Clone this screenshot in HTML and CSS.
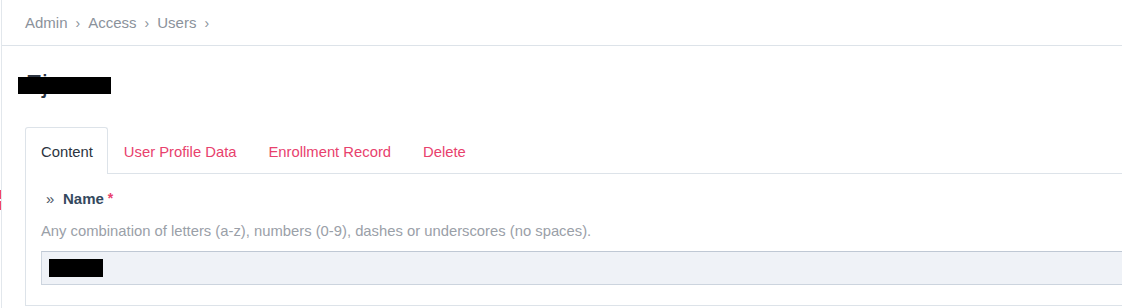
FILE: index.html
```html
<!DOCTYPE html>
<html lang="en">
<head>
<meta charset="utf-8">
<title>Users</title>
<link rel="stylesheet" href="styles.css">
</head>
<body>
<div class="edge-marks"><span class="mark"></span><span class="mark"></span></div>
<div class="app">
  <nav class="breadcrumb">
    <a class="crumb">Admin</a><span class="sep">›</span>
    <a class="crumb">Access</a><span class="sep">›</span>
    <a class="crumb">Users</a><span class="sep">›</span>
  </nav>
  <div class="content">
    <h1 class="title">Zj<span class="redact title-redact"></span></h1>
    <ul class="tabs">
      <li class="tab active">Content</li>
      <li class="tab">User Profile Data</li>
      <li class="tab">Enrollment Record</li>
      <li class="tab">Delete</li>
    </ul>
    <div class="panel">
      <div class="field-label"><span class="chev">»</span><span class="label-text">Name</span><span class="req">*</span></div>
      <div class="help">Any combination of letters (a-z), numbers (0-9), dashes or underscores (no spaces).</div>
      <div class="input"><span class="redact input-redact"></span></div>
    </div>
  </div>
</div>
</body>
</html>
```
FILE: styles.css
```css
html, body {
  margin: 0;
  padding: 0;
  overflow: hidden;
  background: #ffffff;
}
body {
  font-family: "Liberation Sans", Arial, sans-serif;
  font-size: 14.8px;
  color: #2c3440;
}
.edge-marks {
  position: absolute;
  left: 0;
  top: 190px;
  display: flex;
  flex-direction: column;
  gap: 2px;
}
.mark {
  display: block;
  width: 1px;
  height: 9px;
  background: #f0436f;
}
.app {
  margin-left: 1px;
  border-left: 1px solid #e2e7ec;
  min-height: 308px;
}
.breadcrumb {
  height: 46px;
  box-sizing: border-box;
  display: flex;
  align-items: center;
  padding-left: 23px;
  border-bottom: 1px solid #dde3e9;
  color: #8b929b;
  font-size: 15px;
}
.crumb {
  color: #8b929b;
}
.sep {
  font-size: 14px;
  margin: 0 8px;
  color: #8b929b;
}
.content {
  padding-left: 23px;
  margin-right: -40px;
}
.title {
  position: relative;
  margin: 0;
  padding-top: 23px;
  padding-left: 1px;
  font-size: 26px;
  font-weight: normal;
  line-height: 30px;
  height: 58px;
  color: #2c3440;
}
.redact {
  display: inline-block;
  background: #000;
}
.title-redact {
  position: absolute;
  left: -7px;
  top: 31px;
  width: 93px;
  height: 17px;
}
.tabs {
  list-style: none;
  margin: 0;
  padding: 0;
  display: flex;
  border-bottom: 1px solid #dde3e9;
}
.tab {
  padding: 14px 15px 11px;
  line-height: 20px;
  border: 1px solid transparent;
  border-bottom: none;
  color: #e8416d;
  margin-bottom: -1px;
}
.tab.active {
  color: #2c3440;
  border-color: #dde3e9;
  border-radius: 3px 3px 0 0;
  background: #fff;
  padding-right: 14px;
  padding-bottom: 12px;
}
.panel {
  border-left: 1px solid #dde3e9;
  border-bottom: 1px solid #dde3e9;
  padding: 15px 0 20px 15px;
}
.field-label {
  display: flex;
  align-items: center;
  line-height: 20px;
  font-size: 15px;
}
.chev {
  margin-left: 5px;
  width: 17px;
  color: #4b5563;
  font-size: 15px;
}
.label-text {
  font-weight: bold;
  color: #34495e;
}
.req {
  color: #e8416d;
  font-size: 14px;
  font-weight: bold;
  margin-left: 4px;
  align-self: flex-start;
  margin-top: -1px;
}
.help {
  margin-top: 12px;
  line-height: 20px;
  color: #9aa0a8;
}
.input {
  margin-top: 10px;
  height: 32px;
  box-sizing: content-box;
  background: #eff2f7;
  border: 1px solid #ccd4de;
  border-top-color: #bfc8d4;
  padding-left: 7px;
  display: flex;
  align-items: center;
}
.input-redact {
  width: 54px;
  height: 18px;
}
```
